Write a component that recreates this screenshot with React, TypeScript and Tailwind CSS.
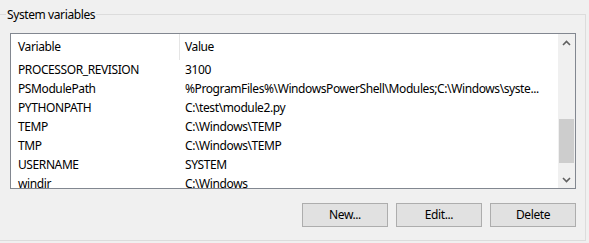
import React from "react";

const rows: [string, string][] = [
  ["PROCESSOR_REVISION", "3100"],
  ["PSModulePath", "%ProgramFiles%\\WindowsPowerShell\\Modules;C:\\Windows\\syste..."],
  ["PYTHONPATH", "C:\\test\\module2.py"],
  ["TEMP", "C:\\Windows\\TEMP"],
  ["TMP", "C:\\Windows\\TEMP"],
  ["USERNAME", "SYSTEM"],
  ["windir", "C:\\Windows"],
];

function Chevron({ up }: { up?: boolean }) {
  return (
    <svg width="9" height="6" viewBox="0 0 9 6" className="block">
      <path
        d={up ? "M1 5 L4.5 1.5 L8 5" : "M1 1 L4.5 4.5 L8 1"}
        fill="none"
        stroke="#606060"
        strokeWidth="1.6"
      />
    </svg>
  );
}

export default function App() {
  return (
    <div
      className="w-[589px] h-[243px] bg-[#f0f0f0] overflow-hidden pt-[14px] text-[12px] tracking-[-0.4px] text-black"
      style={{ fontFamily: '"Noto Sans", "Liberation Sans", sans-serif' }}
    >
      <div className="mr-[3px] h-[227px] border-t border-r border-b border-[#dcdcdc] flex flex-col">
        <div className="-mt-[8px] ml-[6px] w-fit bg-[#f0f0f0] px-[1px] leading-[16px]">System variables</div>
        <div className="ml-[10px] mt-[10px] w-[566px] h-[156px] border border-[#828790] bg-white flex overflow-hidden">
          <div className="w-[547px] shrink-0 grid grid-cols-[169px_378px] grid-rows-[26px] auto-rows-[19px] content-start overflow-hidden whitespace-nowrap text-left">
            <div className="pl-[7px] leading-[26px] border-r border-[#e5e5e5]">Variable</div>
            <div className="pl-[5px] leading-[26px]">Value</div>
            {rows.map(([k, v]) => (
              <React.Fragment key={k}>
                <div className="pl-[7px] leading-[19px] overflow-hidden">{k}</div>
                <div className="pl-[5px] leading-[19px] overflow-hidden">{v}</div>
              </React.Fragment>
            ))}
          </div>
          <div className="w-[17px] shrink-0 bg-[#f0f0f0] flex flex-col">
            <div className="h-[17px] flex items-center justify-center">
              <Chevron up />
            </div>
            <div className="flex-1 flex flex-col">
              <div className="h-[68px]" />
              <div className="h-[44px] mx-[1px] bg-[#cdcdcd]" />
            </div>
            <div className="h-[17px] flex items-center justify-center">
              <Chevron />
            </div>
          </div>
        </div>
        <div className="flex justify-end gap-[8px] mr-[9px] mt-[14px]">
          {["New...", "Edit...", "Delete"].map((b) => (
            <div
              key={b}
              className="w-[86px] h-[24px] border border-[#adadad] bg-[#e1e1e1] flex items-center justify-center"
            >
              {b}
            </div>
          ))}
        </div>
      </div>
    </div>
  );
}
